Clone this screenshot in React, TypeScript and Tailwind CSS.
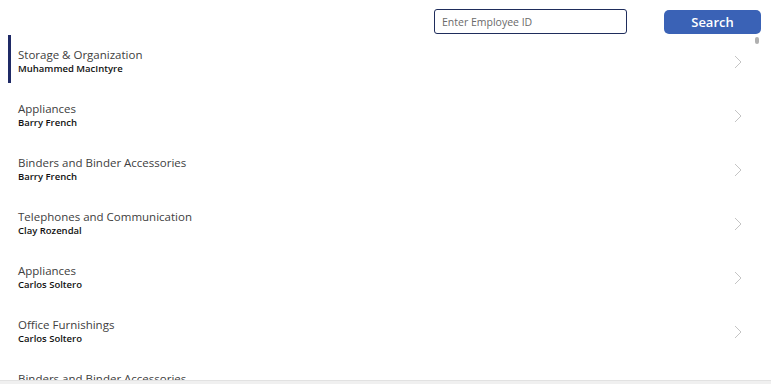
import React from 'react';

const items = [
  { title: 'Storage & Organization', name: 'Muhammed MacIntyre' },
  { title: 'Appliances', name: 'Barry French' },
  { title: 'Binders and Binder Accessories', name: 'Barry French' },
  { title: 'Telephones and Communication', name: 'Clay Rozendal' },
  { title: 'Appliances', name: 'Carlos Soltero' },
  { title: 'Office Furnishings', name: 'Carlos Soltero' },
  { title: 'Binders and Binder Accessories', name: 'Carlos Soltero' },
];

const Chevron = () => (
  <svg width="8" height="14" viewBox="0 0 8 14" fill="none">
    <path d="M1 1 L7 7 L1 13" stroke="#c4c4c4" strokeWidth="1" />
  </svg>
);

const App = () => {
  return (
    <div
      className="relative h-[384px] w-[771px] overflow-hidden bg-white"
      style={{ fontFamily: '"Open Sans", "Noto Sans", sans-serif' }}
    >
      {/* header */}
      <div className="flex h-[35px] items-start pt-[9px]">
        <input
          placeholder="Enter Employee ID"
          className="ml-[434px] h-[25px] w-[193px] rounded-[3px] border border-[#1f2d5c] px-[7px] text-[10.5px] text-[#333] outline-none placeholder:text-[#6a6a6a]"
        />
        <button className="ml-[37px] mt-[1px] h-[24px] w-[97px] rounded-[5px] bg-[#3a62b6] pt-[1px] text-[13px] font-semibold text-white">
          Search
        </button>
      </div>

      {/* scrollbar thumb */}
      <div className="absolute left-[755px] top-[37px] h-[7px] w-[4px] rounded-sm bg-[#b0b0b0]" />

      {/* list */}
      <div className="flex flex-col">
        {items.map((item, i) => (
          <div key={i} className="relative flex h-[54px] items-center pl-[18px] pr-[29px]">
            {i === 0 && <div className="absolute left-[8px] top-0 h-[48px] w-[3px] bg-[#1f2a66]" />}
            <div className="flex flex-1 flex-col pb-[2px]">
              <span className="text-[11.5px] leading-[16px] text-[#404040]">{item.title}</span>
              <span className="text-[9.5px] font-semibold leading-[12px] text-[#111]">{item.name}</span>
            </div>
            <Chevron />
          </div>
        ))}
      </div>

      {/* bottom bar */}
      <div className="absolute bottom-0 left-0 h-[4px] w-full border-t border-[#e2e2e2] bg-[#f0f0f0]" />
    </div>
  );
};

export default App;
